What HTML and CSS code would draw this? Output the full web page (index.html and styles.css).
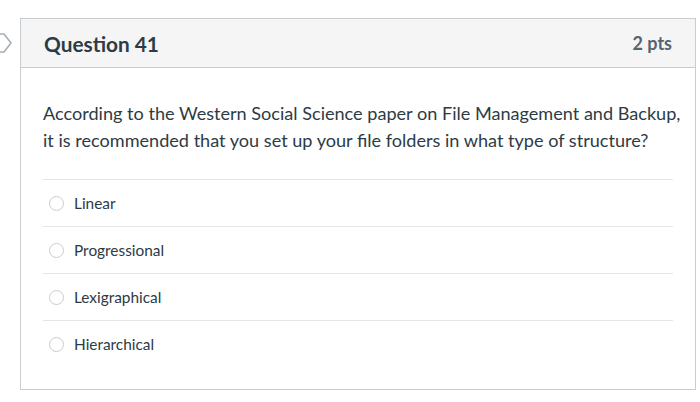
FILE: index.html
```html
<!DOCTYPE html>
<html lang="en">
<head>
<meta charset="utf-8">
<title>Question 41</title>
<link rel="stylesheet" href="styles.css">
</head>
<body>
<div class="page">
  <svg class="marker" width="14" height="22" viewBox="0 0 14 22"><path d="M-6 2 H4 L11 11 L4 20 H-6" fill="none" stroke="#a5afb5" stroke-width="1.6" stroke-linejoin="round"/></svg>
  <div class="card">
    <div class="card-header">
      <h2 class="title">Question 41</h2>
      <span class="pts">2 pts</span>
    </div>
    <div class="card-body">
      <p class="question">According to the Western Social Science paper on File Management and Backup, it is recommended that you set up your file folders in what type of structure?</p>
      <div class="answers">
        <label class="answer"><span class="radio"></span><span class="answer-text">Linear</span></label>
        <label class="answer"><span class="radio"></span><span class="answer-text">Progressional</span></label>
        <label class="answer"><span class="radio"></span><span class="answer-text">Lexigraphical</span></label>
        <label class="answer"><span class="radio"></span><span class="answer-text">Hierarchical</span></label>
      </div>
    </div>
  </div>
</div>
</body>
</html>
```
FILE: styles.css
```css
html, body {
  margin: 0;
  padding: 0;
  background: #ffffff;
}
body {
  font-family: Lato, "Liberation Sans", sans-serif;
  color: #2d3b45;
}
.page {
  position: relative;
  padding: 18px 4px 0 20px;
}
.marker {
  position: absolute;
  left: 0;
  top: 32px;
}
.card {
  border: 1px solid #c7cdd1;
  width: 674px;
  box-sizing: content-box;
}
.card-header {
  display: flex;
  justify-content: space-between;
  align-items: center;
  height: 48px;
  padding: 0 23px;
  background: #f5f5f5;
  border-bottom: 1px solid #c7cdd1;
}
.title {
  margin: 0;
  font-size: 20.8px;
  font-weight: 700;
  color: #2d3b45;
}
.pts {
  font-size: 18px;
  font-weight: 700;
  color: #556572;
}
.card-body {
  padding: 32px 22px 22px 22px;
}
.question {
  margin: 0 -14px 25px 0;
  font-size: 18.1px;
  line-height: 27px;
}
.answer {
  display: flex;
  align-items: center;
  height: 46px;
  border-top: 1px solid #e3e6e8;
}
.radio {
  width: 13px;
  height: 13px;
  border: 1px solid #c7cdd1;
  border-radius: 50%;
  margin-left: 6px;
  margin-right: 10px;
  background: #fff;
}
.answer-text {
  font-size: 15.4px;
  color: #2d3b45;
}
```
